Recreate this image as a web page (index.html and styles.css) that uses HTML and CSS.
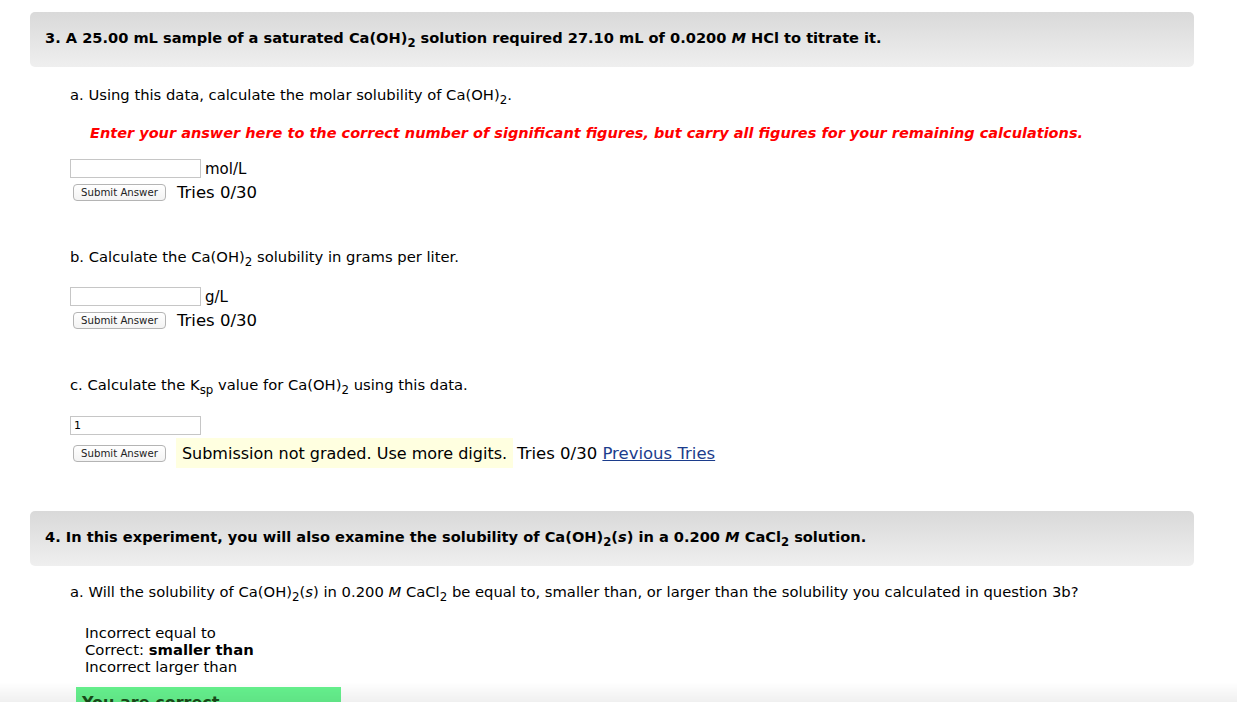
FILE: index.html
```html
<!DOCTYPE html>
<html>
<head>
<meta charset="utf-8">
<link rel="stylesheet" href="styles.css">
</head>
<body>
<div class="page">
  <div class="header"><span>3. A 25.00 mL sample of a saturated Ca(OH)<sub>2</sub> solution required 27.10 mL of 0.0200 <i>M</i> HCl to titrate it.</span></div>

  <div class="part">
    <div class="q q-first">a. Using this data, calculate the molar solubility of Ca(OH)<sub>2</sub>.</div>
    <div class="note">Enter your answer here to the correct number of significant figures, but carry all figures for your remaining calculations.</div>
    <div class="input-row"><input class="answer" type="text" value=""><span class="unit">mol/L</span></div>
    <div class="submit-row"><button class="submit">Submit Answer</button><span class="tries">Tries 0/30</span></div>

    <div class="q q-next">b. Calculate the Ca(OH)<sub>2</sub> solubility in grams per liter.</div>
    <div class="input-row input-row-b"><input class="answer" type="text" value=""><span class="unit">g/L</span></div>
    <div class="submit-row"><button class="submit">Submit Answer</button><span class="tries">Tries 0/30</span></div>

    <div class="q q-next">c. Calculate the K<sub>sp</sub> value for Ca(OH)<sub>2</sub> using this data.</div>
    <div class="input-row input-row-c"><input class="answer small-val" type="text" value="1"></div>
    <div class="submit-row submit-row-c"><button class="submit">Submit Answer</button><span class="feedback">Submission not graded. Use more digits.</span><span class="tries tries-c">Tries 0/30 <a class="prev" href="#">Previous Tries</a></span></div>
  </div>

  <div class="header header-4"><span>4. In this experiment, you will also examine the solubility of Ca(OH)<sub>2</sub>(<i>s</i>) in a 0.200 <i>M</i> CaCl<sub>2</sub> solution.</span></div>

  <div class="part">
    <div class="q q-4a">a. Will the solubility of Ca(OH)<sub>2</sub>(<i>s</i>) in 0.200 <i>M</i> CaCl<sub>2</sub> be equal to, smaller than, or larger than the solubility you calculated in question 3b?</div>
    <div class="options">
      <div>Incorrect equal to</div>
      <div>Correct: <b>smaller than</b></div>
      <div>Incorrect larger than</div>
    </div>
    <div class="correct">You are correct.</div>
  </div>
</div>
<div class="fade"></div>
</body>
</html>
```

FILE: styles.css
```css
html, body {
  margin: 0;
  padding: 0;
  background: #ffffff;
}
body {
  font-family: "DejaVu Sans", Verdana, sans-serif;
  color: #000;
  overflow: hidden;
  height: 702px;
}
.page {
  padding-top: 12px;
}
sub {
  font-size: 0.8em;
  vertical-align: -0.35em;
  line-height: 0;
}
.header {
  margin: 0 43px 0 30px;
  height: 55px;
  box-sizing: border-box;
  padding: 0 0 4px 15px;
  display: flex;
  align-items: center;
  font-weight: bold;
  font-size: 14.6px;
  background: linear-gradient(to bottom, #d9d9d9, #efefef);
  border-radius: 5px;
  white-space: nowrap;
}
.header-4 {
  margin-top: 43px;
  padding-bottom: 5px;
}
.part {
  padding-left: 70px;
}
.q {
  font-size: 14.75px;
  line-height: 20px;
  white-space: nowrap;
}
.q-first {
  margin-top: 18px;
}
.q-next {
  margin-top: 45px;
}
.q-4a {
  margin-top: 16px;
}
.note {
  margin-top: 18px;
  padding-left: 20px;
  color: #ff0000;
  font-weight: bold;
  font-style: italic;
  font-size: 14.5px;
  line-height: 20px;
  white-space: nowrap;
}
.input-row {
  margin-top: 16px;
  height: 19px;
  display: flex;
  align-items: center;
}
.input-row-b {
  margin-top: 20px;
}
.input-row-c {
  margin-top: 21px;
}
.answer {
  width: 131px;
  height: 19px;
  box-sizing: border-box;
  border: 1px solid #c6c6c6;
  margin: 0;
  padding: 0 3px;
  font-family: "DejaVu Sans", Verdana, sans-serif;
  font-size: 11px;
  background: #fff;
  outline: none;
}
.unit {
  margin-left: 4px;
  font-size: 15px;
}
.submit-row {
  margin-top: 4px;
  height: 20px;
  display: flex;
  align-items: center;
}
.submit-row-c {
  margin-top: 3px;
  height: 30px;
}
.submit {
  margin: 0 0 0 3px;
  height: 17px;
  box-sizing: border-box;
  padding: 0 7px;
  border: 1px solid #b4b4b4;
  border-radius: 4px;
  background: linear-gradient(to bottom, #ffffff, #f3f3f3);
  font-family: "DejaVu Sans", Verdana, sans-serif;
  font-size: 10.2px;
  line-height: 15px;
  color: #222;
}
.tries {
  margin-left: 11px;
  font-size: 16.5px;
  white-space: nowrap;
}
.feedback {
  margin-left: 10px;
  height: 30px;
  display: flex;
  align-items: center;
  padding: 0 6px;
  background: #ffffe0;
  font-size: 16px;
  white-space: nowrap;
}
.tries-c {
  margin-left: 4px;
}
.prev {
  color: #1c3d8c;
  text-decoration: underline;
}
.options {
  margin-top: 22px;
  padding-left: 15px;
  font-size: 14.8px;
  line-height: 17px;
}
.correct {
  margin-top: 12px;
  margin-left: 6px;
  width: 265px;
  height: 40px;
  box-sizing: border-box;
  padding: 6px 6px;
  background: #66f28e;
  color: #1a4d1a;
  font-weight: bold;
  font-size: 16px;
}
.fade {
  position: fixed;
  left: 0;
  right: 0;
  bottom: 0;
  height: 20px;
  background: linear-gradient(to bottom, rgba(0,0,0,0), rgba(0,0,0,0.06));
  pointer-events: none;
}
```
